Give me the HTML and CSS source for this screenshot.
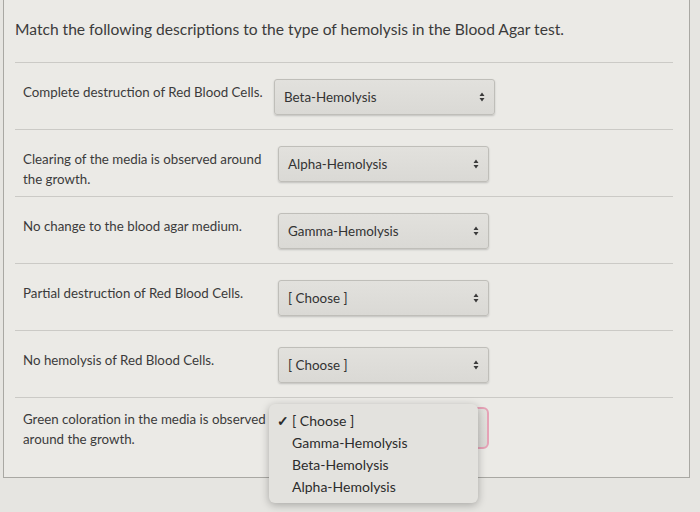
FILE: index.html
```html
<!DOCTYPE html>
<html>
<head>
<meta charset="utf-8">
<link rel="stylesheet" href="styles.css">
</head>
<body>
<div class="card">
  <div class="title">Match the following descriptions to the type of hemolysis in the Blood Agar test.</div>
  <div class="rows">
    <div class="row">
      <div class="label">Complete destruction of Red Blood Cells.</div>
      <div class="select wide"><span>Beta-Hemolysis</span><svg class="arrows" width="6" height="10" viewBox="0 0 6 10"><path d="M3 0.5L5.5 4H0.5Z M3 9.5L5.5 6H0.5Z" fill="#3a3a3a"/></svg></div>
    </div>
    <div class="row">
      <div class="label">Clearing of the media is observed around the growth.</div>
      <div class="select"><span>Alpha-Hemolysis</span><svg class="arrows" width="6" height="10" viewBox="0 0 6 10"><path d="M3 0.5L5.5 4H0.5Z M3 9.5L5.5 6H0.5Z" fill="#3a3a3a"/></svg></div>
    </div>
    <div class="row">
      <div class="label">No change to the blood agar medium.</div>
      <div class="select"><span>Gamma-Hemolysis</span><svg class="arrows" width="6" height="10" viewBox="0 0 6 10"><path d="M3 0.5L5.5 4H0.5Z M3 9.5L5.5 6H0.5Z" fill="#3a3a3a"/></svg></div>
    </div>
    <div class="row">
      <div class="label">Partial destruction of Red Blood Cells.</div>
      <div class="select"><span>[ Choose ]</span><svg class="arrows" width="6" height="10" viewBox="0 0 6 10"><path d="M3 0.5L5.5 4H0.5Z M3 9.5L5.5 6H0.5Z" fill="#3a3a3a"/></svg></div>
    </div>
    <div class="row">
      <div class="label">No hemolysis of Red Blood Cells.</div>
      <div class="select"><span>[ Choose ]</span><svg class="arrows" width="6" height="10" viewBox="0 0 6 10"><path d="M3 0.5L5.5 4H0.5Z M3 9.5L5.5 6H0.5Z" fill="#3a3a3a"/></svg></div>
    </div>
    <div class="row last">
      <div class="label">Green coloration in the media is observed around the growth.</div>
      <div class="select focused"><svg class="arrows" width="6" height="10" viewBox="0 0 6 10"><path d="M3 0.5L5.5 4H0.5Z M3 9.5L5.5 6H0.5Z" fill="#3a3a3a"/></svg>
        <div class="menu">
          <div class="opt checked"><span class="check">✓</span>[ Choose ]</div>
          <div class="opt">Gamma-Hemolysis</div>
          <div class="opt">Beta-Hemolysis</div>
          <div class="opt">Alpha-Hemolysis</div>
        </div>
      </div>
    </div>
  </div>
</div>
</body>
</html>
```
FILE: styles.css
```css
html, body {
  margin: 0;
  padding: 0;
  background: #e6e5e1;
  height: 512px;
  overflow: hidden;
  font-family: Lato, "Liberation Sans", sans-serif;
  color: #3b3b3b;
}
.card {
  margin: -2px 10px 0 3px;
  height: 480px;
  box-sizing: border-box;
  border: 1px solid #a9a8a3;
  background: #ebeae6;
  padding: 0 0 0 11px;
}
.title {
  font-size: 15.6px;
  line-height: 20px;
  padding: 20px 0 0 0;
  height: 63px;
  box-sizing: border-box;
}
.rows {
  width: 658px;
}
.row {
  display: flex;
  align-items: flex-start;
  border-top: 1px solid #cbcac6;
  height: 67px;
  box-sizing: border-box;
  padding: 16px 0 0 8px;
}
.row.last {
  height: 80px;
  padding-top: 9px;
}
.label {
  width: 245px;
  font-size: 13.3px;
  line-height: 20px;
  margin-top: 3px;
  margin-right: 10px;
}
.row.last .label {
  margin-top: 2px;
}
.select {
  position: relative;
  width: 211px;
  height: 36px;
  box-sizing: border-box;
  border: 1px solid #bfbeb9;
  border-radius: 3px;
  background: linear-gradient(#e2e1dd, #dad9d5);
  box-shadow: 0 1px 2px rgba(0,0,0,0.18);
  display: flex;
  align-items: center;
  justify-content: space-between;
  padding: 0 9px 0 9px;
  font-size: 13.4px;
  color: #333;
}
.select.wide {
  width: 221px;
  margin-left: -4px;
}
.select.focused {
  border: 2px solid #e5a2b6;
  border-radius: 6px;
  height: 42px;
  box-shadow: none;
  justify-content: flex-end;
}
.menu {
  position: absolute;
  left: -11px;
  top: -5px;
  width: 209px;
  height: 99px;
  box-sizing: border-box;
  background: #e3e2de;
  border-radius: 6px;
  box-shadow: 0 2px 9px rgba(0,0,0,0.28);
  padding: 6px 0 0 0;
  z-index: 2;
}
.opt {
  font-size: 14px;
  line-height: 22px;
  padding-left: 23px;
  color: #2c2c2c;
  position: relative;
}
.check {
  position: absolute;
  left: 8px;
  font-size: 14px;
  font-weight: bold;
}
```
